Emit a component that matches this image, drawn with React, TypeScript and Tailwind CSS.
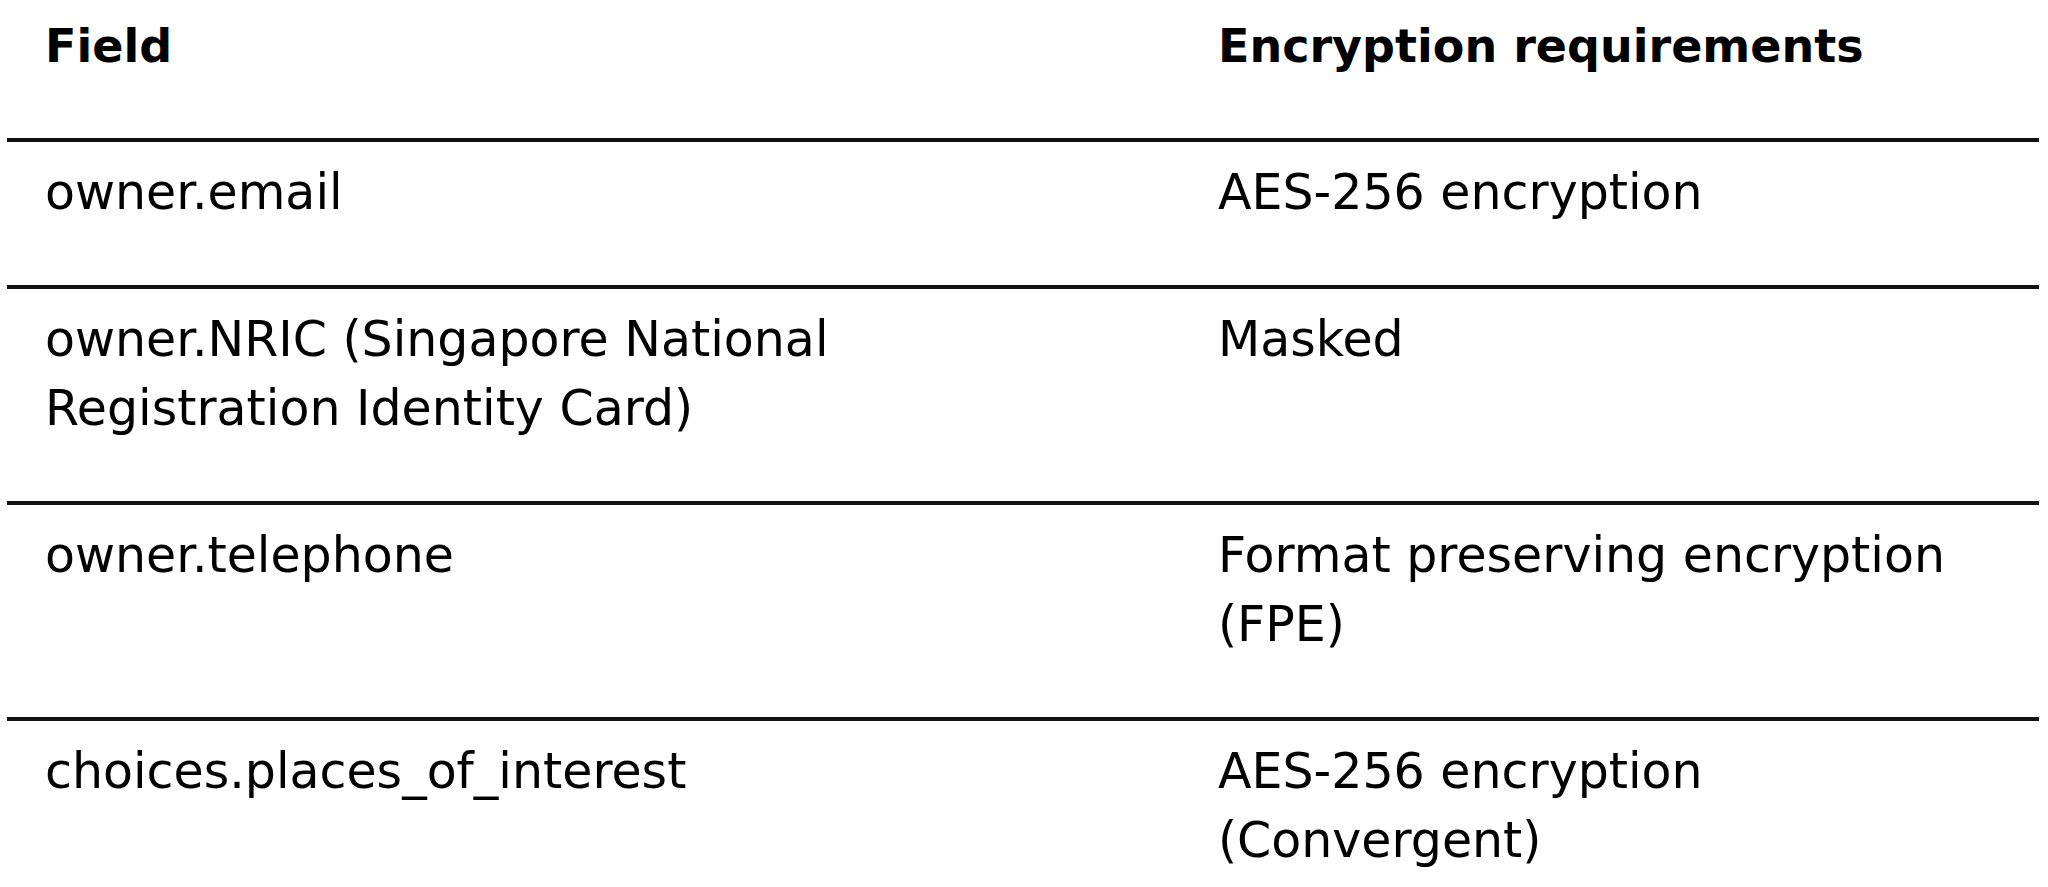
import React from "react";

interface EncryptionRow {
  field: string[];
  requirement: string[];
}

const rows: EncryptionRow[] = [
  { field: ["owner.email"], requirement: ["AES-256 encryption"] },
  {
    field: ["owner.NRIC (Singapore National", "Registration Identity Card)"],
    requirement: ["Masked"],
  },
  { field: ["owner.telephone"], requirement: ["Format preserving encryption", "(FPE)"] },
  {
    field: ["choices.places_of_interest"],
    requirement: ["AES-256 encryption", "(Convergent)"],
  },
];

function Lines({ lines }: { lines: string[] }): JSX.Element {
  return (
    <>
      {lines.map((line) => (
        <span key={line} className="block whitespace-nowrap">
          {line}
        </span>
      ))}
    </>
  );
}

export default function App(): JSX.Element {
  return (
    <div
      className="min-h-screen w-full bg-white pl-[7px] pr-[9px] text-black"
      style={{ fontFamily: '"DejaVu Sans", "Liberation Sans", sans-serif' }}
    >
      <div className="grid grid-cols-[1173px_1fr] border-b-[4px] border-[#111] pt-[12px] pb-[57px] text-[46px] font-bold leading-[69px]">
        <div className="pl-[38px]">Field</div>
        <div className="pl-[38px]">Encryption requirements</div>
      </div>

      {rows.map((row, i) => (
        <div
          key={row.field[0]}
          className={
            "grid grid-cols-[1173px_1fr] pt-[16px] pb-[58px] text-[49px] leading-[69px] " +
            (i < rows.length - 1 ? "border-b-[4px] border-[#111]" : "")
          }
        >
          <div className="pl-[38px]">
            <Lines lines={row.field} />
          </div>
          <div className="pl-[38px]">
            <Lines lines={row.requirement} />
          </div>
        </div>
      ))}
    </div>
  );
}
